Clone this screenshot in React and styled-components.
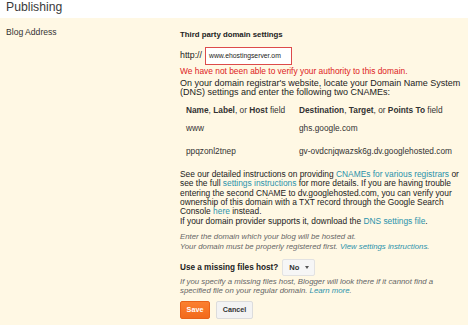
import styled, { createGlobalStyle } from "styled-components";

const Global = createGlobalStyle`
  html, body {
    margin: 0;
    padding: 0;
    background: #fff;
    font-family: "Liberation Sans", Arial, sans-serif;
    color: #333;
  }
`;

const Title = styled.h1`
  margin: 0;
  height: 18px;
  padding-left: 6px;
  font-size: 12.2px;
  font-weight: normal;
  line-height: 15px;
  color: #3a3a3a;
`;

const Panel = styled.div`
  width: 468px;
  background: #fff8e4;
  display: grid;
  grid-template-columns: 180px 1fr;
  padding: 9px 0 6px;
  box-sizing: border-box;
  font-size: 8.8px;
  line-height: 9.4px;
`;

const Label = styled.div`
  padding-left: 6px;
  font-size: 8.6px;
  line-height: 10px;
  color: #333;
`;

const Content = styled.div`
  display: flex;
  flex-direction: column;
  padding-top: 3px;
  color: #222;
  white-space: nowrap;
`;

const Heading = styled.div`
  font-weight: bold;
  font-size: 7.8px;
  line-height: 10px;
  color: #222;
`;

const InputRow = styled.div`
  display: flex;
  align-items: center;
  gap: 3px;
  margin-top: 7px;
`;

const Input = styled.div`
  width: 82px;
  height: 16px;
  border: 1px solid #dd4b4b;
  background: #fff;
  font-size: 6.8px;
  line-height: 16px;
  padding-left: 3px;
  color: #222;
`;

const Error = styled.div`
  margin-top: 1px;
  color: #dd2222;
  font-size: 8.4px;
  line-height: 10px;
`;

const Para = styled.p`
  margin: ${(p) => p.$mt || 0}px 0 0;
  font-size: ${(p) => p.$size || 8.8}px;
`;

const Table = styled.div`
  display: grid;
  grid-template-columns: 113px 1fr;
  padding-left: 6px;
  margin-top: 7px;
  font-size: 8.3px;
`;

const Cell = styled.div`
  margin-bottom: ${(p) => p.$mb || 0}px;
  line-height: 10px;
  color: #333;
`;

const Link = styled.a`
  color: #2a92ab;
  text-decoration: none;
`;

const Hint = styled.p`
  margin: ${(p) => p.$mt || 0}px 0 0;
  font-style: italic;
  font-size: 7.8px;
  color: #666;
`;

const HostRow = styled.div`
  display: flex;
  align-items: center;
  gap: 4px;
  margin-top: 8px;
  font-weight: bold;
  font-size: 8.2px;
  color: #222;
`;

const Select = styled.div`
  width: 33px;
  height: 17px;
  box-sizing: border-box;
  border: 1px solid #e2e2e2;
  border-radius: 2px;
  background: #f6f6f6;
  display: flex;
  align-items: center;
  gap: 6px;
  padding-left: 6px;
  font-size: 7.6px;
  color: #333;
`;

const Caret = styled.span`
  width: 0;
  height: 0;
  border-left: 2.5px solid transparent;
  border-right: 2.5px solid transparent;
  border-top: 3px solid #555;
`;

const Buttons = styled.div`
  display: flex;
  gap: 6px;
  margin-top: 5px;
`;

const Button = styled.button`
  height: 18px;
  padding: 0;
  width: ${(p) => (p.$primary ? 30 : 37)}px;
  box-sizing: border-box;
  border-radius: 2px;
  font-family: inherit;
  font-weight: bold;
  font-size: 7.2px;
  border: 1px solid ${(p) => (p.$primary ? "#e8621a" : "#dcdcdc")};
  background: ${(p) =>
    p.$primary ? "linear-gradient(#fb8030, #f26a1c)" : "#f3f3f3"};
  color: ${(p) => (p.$primary ? "#fff" : "#333")};
`;

export default function App() {
  return (
    <>
      <Global />
      <Title>Publishing</Title>
      <Panel>
        <Label>Blog Address</Label>
        <Content>
          <Heading>Third party domain settings</Heading>
          <InputRow>
            <span>http://</span>
            <Input>www.ehostingserver.om</Input>
          </InputRow>
          <Error>We have not been able to verify your authority to this domain.</Error>
          <Para $mt={3} $size={9}>
            On your domain registrar's website, locate your Domain Name System
            <br />
            (DNS) settings and enter the following two CNAMEs:
          </Para>
          <Table>
            <Cell $mb={8}>
              <b>Name</b>, <b>Label</b>, or <b>Host</b> field
            </Cell>
            <Cell $mb={8}>
              <b>Destination</b>, <b>Target</b>, or <b>Points To</b> field
            </Cell>
            <Cell $mb={13}>www</Cell>
            <Cell $mb={13}>ghs.google.com</Cell>
            <Cell>ppqzonl2tnep</Cell>
            <Cell>gv-ovdcnjqwazsk6g.dv.googlehosted.com</Cell>
          </Table>
          <Para $mt={14} $size={8.4}>
            See our detailed instructions on providing{" "}
            <Link>CNAMEs for various registrars</Link> or
            <br />
            see the full <Link>settings instructions</Link> for more details. If
            you are having trouble
            <br />
            entering the second CNAME to dv.googlehosted.com, you can verify your
            <br />
            ownership of this domain with a TXT record through the Google Search
            <br />
            Console <Link>here</Link> instead.
            <br />
            If your domain provider supports it, download the{" "}
            <Link>DNS settings file</Link>.
          </Para>
          <Hint $mt={6}>
            Enter the domain which your blog will be hosted at.
            <br />
            Your domain must be properly registered first.{" "}
            <Link>View settings instructions</Link>.
          </Hint>
          <HostRow>
            Use a missing files host?
            <Select>
              <b>No</b> <Caret />
            </Select>
          </HostRow>
          <Hint $mt={1}>
            If you specify a missing files host, Blogger will look there if it
            cannot find a
            <br />
            specified file on your regular domain. <Link>Learn more</Link>.
          </Hint>
          <Buttons>
            <Button $primary>Save</Button>
            <Button>Cancel</Button>
          </Buttons>
        </Content>
      </Panel>
    </>
  );
}
